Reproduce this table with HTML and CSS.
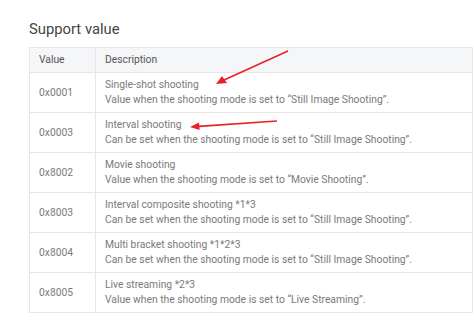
FILE: index.html
```html
<!DOCTYPE html>
<html>
<head>
<meta charset="utf-8">
<link rel="stylesheet" href="styles.css">
</head>
<body>
<div class="page">
  <h2 class="title">Support value</h2>
  <table class="values">
    <thead>
      <tr><th class="col-val">Value</th><th>Description</th></tr>
    </thead>
    <tbody>
      <tr><td class="col-val">0x0001</td><td>Single-shot shooting<br>Value when the shooting mode is set to “Still Image Shooting”.</td></tr>
      <tr><td class="col-val">0x0003</td><td>Interval shooting<br>Can be set when the shooting mode is set to “Still Image Shooting”.</td></tr>
      <tr><td class="col-val">0x8002</td><td>Movie shooting<br>Value when the shooting mode is set to “Movie Shooting”.</td></tr>
      <tr><td class="col-val">0x8003</td><td>Interval composite shooting *1*3<br>Can be set when the shooting mode is set to “Still Image Shooting”.</td></tr>
      <tr><td class="col-val">0x8004</td><td>Multi bracket shooting *1*2*3<br>Can be set when the shooting mode is set to “Still Image Shooting”.</td></tr>
      <tr><td class="col-val">0x8005</td><td>Live streaming *2*3<br>Value when the shooting mode is set to “Live Streaming”.</td></tr>
    </tbody>
  </table>
  <svg class="arrows" width="474" height="330" viewBox="0 0 474 330">
    <line x1="288" y1="51" x2="224" y2="80" stroke="#e8202a" stroke-width="1.6"/>
    <polygon points="216,84 222,76 227,83" fill="#e8202a"/>
    <line x1="277" y1="121" x2="199" y2="126.4" stroke="#e8202a" stroke-width="1.6"/>
    <polygon points="190,127 199,122.6 199.6,130" fill="#e8202a"/>
  </svg>
</div>
</body>
</html>
```
FILE: styles.css
```css
html, body {
  margin: 0;
  padding: 0;
  background: #ffffff;
}
.page {
  position: relative;
  width: 474px;
  height: 330px;
  overflow: hidden;
  padding: 20px 0 0 29px;
  box-sizing: border-box;
  font-family: Roboto, "Liberation Sans", sans-serif;
}
.title {
  margin: 0 0 9px 0;
  font-size: 14.8px;
  line-height: 18px;
  font-weight: 400;
  color: #444444;
}
.values {
  border-collapse: collapse;
  width: 444px;
  font-size: 10.3px;
  line-height: 15px;
  color: #7a7a7a;
}
.values th, .values td {
  border: 1px solid #e6e6e6;
  text-align: left;
  font-weight: 400;
  vertical-align: middle;
  white-space: nowrap;
}
.values th {
  background: #f5f6f7;
  color: #555555;
  padding: 4px 9px 5px;
}
.values td {
  padding: 4px 9px 5px;
}
.values .col-val {
  width: 47px;
}
.arrows {
  position: absolute;
  left: 0;
  top: 0;
  pointer-events: none;
}
```
